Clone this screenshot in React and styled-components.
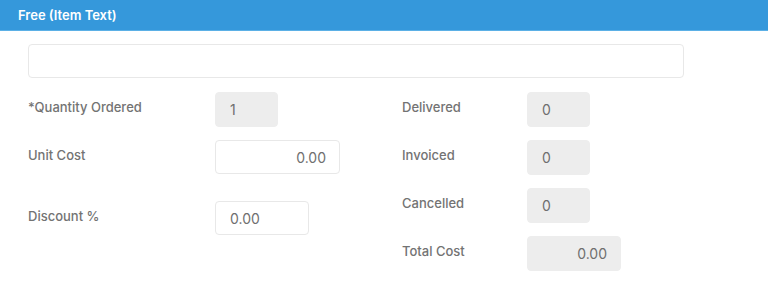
import styled, { createGlobalStyle } from "styled-components";

const GlobalStyle = createGlobalStyle`
  body {
    margin: 0;
    background: #ffffff;
    font-family: "Inter", "Liberation Sans", sans-serif;
  }
`;

const Panel = styled.div`
  width: 768px;
  height: 300px;
  background: #ffffff;
`;

const Header = styled.div`
  height: 31px;
  box-sizing: border-box;
  display: flex;
  align-items: center;
  padding: 0 18px;
  background-color: #3598db;
  border-bottom: 1px solid #5bb0e6;
`;

const Title = styled.h3`
  margin: 0;
  font-size: 13px;
  font-weight: 600;
  color: #ffffff;
`;

const Body = styled.div`
  padding: 13px 28px 0 28px;
  display: flex;
  flex-direction: column;
  gap: 14px;
`;

const TextField = styled.input`
  width: 656px;
  height: 34px;
  box-sizing: border-box;
  border: 1px solid #e8e8e8;
  border-radius: 4px;
  outline: none;
  padding: 0 12px;
  font-family: inherit;
  font-size: 14px;
  color: #6f6f6f;
`;

const Columns = styled.div`
  display: flex;
`;

const Column = styled.div`
  width: ${(p) => p.$width}px;
  display: flex;
  flex-direction: column;
  gap: 13px;
`;

const Row = styled.div`
  display: flex;
  align-items: center;
  margin-top: ${(p) => p.$offset || 0}px;
`;

const Label = styled.label`
  width: ${(p) => p.$width}px;
  flex-shrink: 0;
  padding-bottom: 5px;
  font-size: 13px;
  font-weight: 500;
  color: #737373;
`;

const Field = styled.input`
  width: ${(p) => p.$width}px;
  height: ${(p) => (p.$readOnly ? 35 : 34)}px;
  box-sizing: border-box;
  padding: 0 13px 0 14px;
  border-radius: 4px;
  border: 1px solid ${(p) => (p.$readOnly ? "#ededed" : "#e8e8e8")};
  background: ${(p) => (p.$readOnly ? "#ededed" : "#ffffff")};
  outline: none;
  font-family: inherit;
  font-size: 14px;
  color: #6f6f6f;
  text-align: ${(p) => (p.$right ? "right" : "left")};
`;

const leftRows = [
  { label: "*Quantity Ordered", value: "1", width: 63, readOnly: true },
  { label: "Unit Cost", value: "0.00", width: 125, right: true },
  { label: "Discount %", value: "0.00", width: 94, offset: 14 },
];

const rightRows = [
  { label: "Delivered", value: "0", width: 63, readOnly: true },
  { label: "Invoiced", value: "0", width: 63, readOnly: true },
  { label: "Cancelled", value: "0", width: 63, readOnly: true },
  { label: "Total Cost", value: "0.00", width: 94, readOnly: true, right: true },
];

const FieldRow = ({ row, labelWidth }) => (
  <Row $offset={row.offset}>
    <Label $width={labelWidth}>{row.label}</Label>
    <Field
      $width={row.width}
      $readOnly={row.readOnly}
      $right={row.right}
      value={row.value}
      readOnly
    />
  </Row>
);

const App = () => {
  return (
    <>
      <GlobalStyle />
      <Panel>
        <Header>
          <Title>Free (Item Text)</Title>
        </Header>
        <Body>
          <TextField defaultValue="" />
          <Columns>
            <Column $width={374}>
              {leftRows.map((row) => (
                <FieldRow key={row.label} row={row} labelWidth={187} />
              ))}
            </Column>
            <Column $width={300}>
              {rightRows.map((row) => (
                <FieldRow key={row.label} row={row} labelWidth={125} />
              ))}
            </Column>
          </Columns>
        </Body>
      </Panel>
    </>
  );
};

export default App;
